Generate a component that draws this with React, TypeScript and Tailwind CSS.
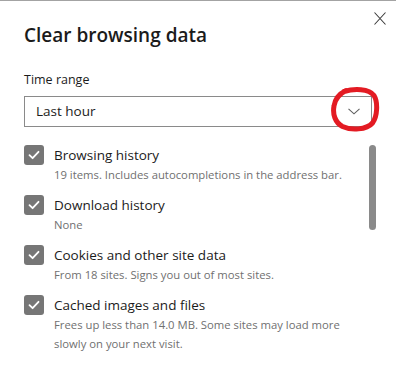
const font = { fontFamily: '"Open Sans", "Noto Sans", sans-serif' };

const items = [
  { title: "Browsing history", desc: "19 items. Includes autocompletions in the address bar." },
  { title: "Download history", desc: "None" },
  { title: "Cookies and other site data", desc: "From 18 sites. Signs you out of most sites." },
  { title: "Cached images and files", desc: "Frees up less than 14.0 MB. Some sites may load more slowly on your next visit." },
];

function Check() {
  return (
    <div className="flex size-5 shrink-0 items-center justify-center rounded-[3px] bg-[#767676]">
      <svg width="14" height="14" viewBox="0 0 14 14" fill="none">
        <path d="M2.5 7.2 L5.6 10.2 L11.5 3.8" stroke="white" strokeWidth="1.8" strokeLinecap="round" strokeLinejoin="round" />
      </svg>
    </div>
  );
}

export default function App() {
  return (
    <div className="h-[369px] w-[396px] overflow-hidden border-t border-[#a3a3a3] bg-white text-[#1b1b1b]" style={font}>
      <div className="flex justify-end pr-[10px] pt-[11px]">
        <svg width="12" height="13" viewBox="0 0 12 13" fill="none">
          <path d="M0.5 0.5 L11.5 12.5 M11.5 0.5 L0.5 12.5" stroke="#3b3b3b" strokeWidth="1.1" />
        </svg>
      </div>
      <div className="px-6">
        <h1 className="mt-[-4px] text-[19px] font-semibold leading-[28px]">Clear browsing data</h1>
        <div className="mt-[22px] text-[12.5px] leading-[18px]">Time range</div>
        <div className="relative mt-[7px] flex h-[31px] w-[348px] items-center border border-[#8a8a8a] pl-[11px]">
          <span className="text-[13.5px]">Last hour</span>
          <svg className="absolute left-[323px] top-[11px]" width="12" height="7" viewBox="0 0 12 7" fill="none">
            <path d="M0.5 0.8 L6 5.8 L11.5 0.8" stroke="#5f5f5f" strokeWidth="1.1" />
          </svg>
          <svg className="absolute left-[305px] top-[-10px]" width="50" height="46" viewBox="0 0 50 46" fill="none">
            <path
              d="M14 4.5 C24 1.5 39 1.5 44 8.5 C48 15 47.5 29 42.5 36 C36.5 43 21 43.5 12.5 39.5 C5 35.5 2.5 27 4 19 C5 12 9 7 16 3.5"
              stroke="#e31b23"
              strokeWidth="5"
              strokeLinecap="round"
            />
          </svg>
        </div>
        <div className="mt-[18px] flex">
          <div className="flex w-[334px] flex-col gap-[11px]">
            {items.map((it) => (
              <div key={it.title} className="flex gap-[10px]">
                <Check />
                <div className="pt-[1px]">
                  <div className="text-[13.5px] leading-[19px]">{it.title}</div>
                  <div className="text-[11.3px] leading-[19px] text-[#707070]">{it.desc}</div>
                </div>
              </div>
            ))}
          </div>
          <div className="ml-auto mr-[-4px] h-[85px] w-[7px] rounded-full bg-[#8a8a8a]" />
        </div>
      </div>
    </div>
  );
}
